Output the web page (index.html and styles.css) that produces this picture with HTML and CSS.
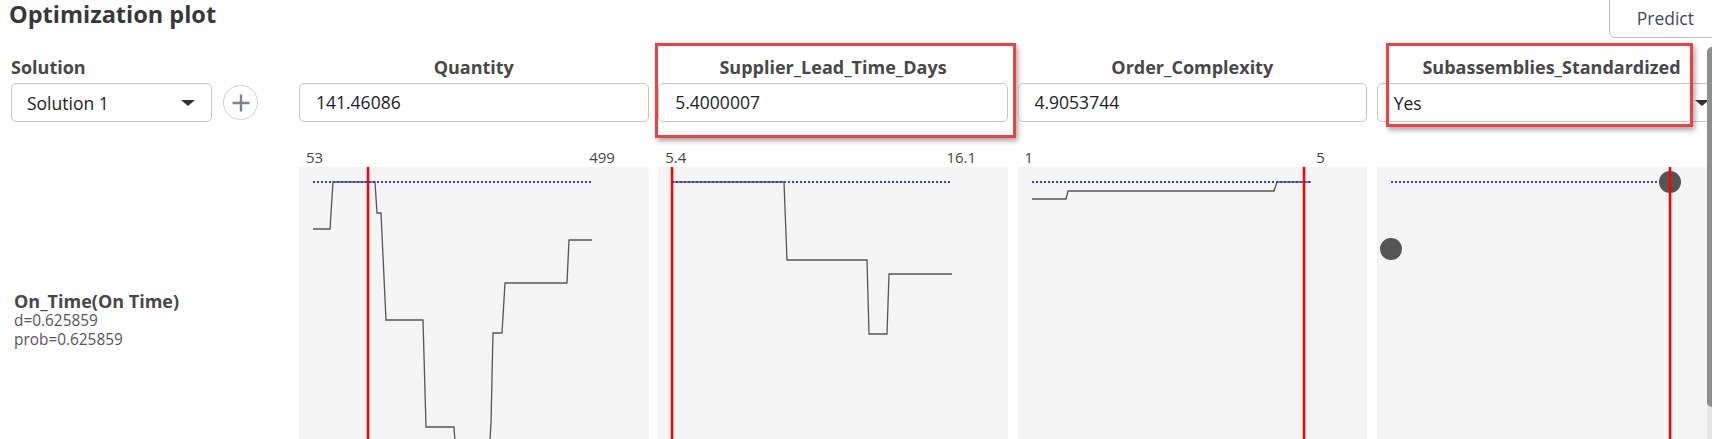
FILE: index.html
```html
<!DOCTYPE html>
<html lang="en">
<head>
<meta charset="utf-8">
<title>Optimization plot</title>
<link rel="stylesheet" href="styles.css">
</head>
<body>
<div class="page">
  <div class="topbar">
    <h1 class="title">Optimization plot</h1>
    <button class="predict">Predict</button>
  </div>

  <div class="grid">
    <!-- row 1: headers -->
    <div class="solution">
      <div class="sol-label">Solution</div>
      <div class="sol-row">
        <div class="select sol-select"><span>Solution 1</span><span class="caret"></span></div>
        <button class="add" aria-label="Add solution">
          <svg viewBox="0 0 20 20" width="20" height="20"><path d="M10 1.5V18.5M1.5 10H18.5"/></svg>
        </button>
      </div>
    </div>
    <div class="factor">
      <div class="flabel">Quantity</div>
      <div class="field">141.46086</div>
    </div>
    <div class="factor">
      <div class="flabel">Supplier_Lead_Time_Days</div>
      <div class="field">5.4000007</div>
      <div class="mark mark-supplier"></div>
    </div>
    <div class="factor">
      <div class="flabel">Order_Complexity</div>
      <div class="field">4.9053744</div>
    </div>
    <div class="factor">
      <div class="flabel">Subassemblies_Standardized</div>
      <div class="select field-select"><span>Yes</span><span class="caret"></span></div>
      <div class="mark mark-subassy"></div>
    </div>

    <!-- row 2: axis ranges -->
    <div></div>
    <div class="axis"><span>53</span><span class="axis-max">499</span></div>
    <div class="axis"><span>5.4</span><span class="axis-max">16.1</span></div>
    <div class="axis"><span>1</span><span class="axis-max">5</span></div>
    <div class="axis"></div>

    <!-- row 3: response + panels -->
    <div class="resp">
      <div class="resp-name">On_Time(On Time)</div>
      <div class="resp-val">d=0.625859</div>
      <div class="resp-val">prob=0.625859</div>
    </div>
    <div class="panel">
      <svg viewBox="0 0 349.5 305">
        <polyline class="curve" points="14,62 31,62 34,15 76,15 78,46 82,46 87,153 124,153 127,260 155,260 157,290 190,290 192,256 194,166 203,166 206,116 268,116 270,73 293,73"/>
        <line class="target" x1="14" y1="15" x2="293" y2="15"/>
        <line class="current" x1="69" y1="0" x2="69" y2="305"/>
      </svg>
    </div>
    <div class="panel">
      <svg viewBox="0 0 349.5 305">
        <polyline class="curve" points="14,15 126,15 129,93 209,93 211,167 229,167 231,107 294,107"/>
        <line class="target" x1="14" y1="15" x2="292" y2="15"/>
        <line class="current" x1="14" y1="0" x2="14" y2="305"/>
      </svg>
    </div>
    <div class="panel">
      <svg viewBox="0 0 349.5 305">
        <polyline class="curve" points="14,32 48,32 50,24 256,24 259,15 293,15"/>
        <line class="target" x1="14" y1="15" x2="293" y2="15"/>
        <line class="current" x1="286" y1="0" x2="286" y2="305"/>
      </svg>
    </div>
    <div class="panel">
      <svg viewBox="0 0 349.5 305">
        <line class="target" x1="14" y1="15" x2="292" y2="15"/>
        <circle class="pt" cx="14" cy="82" r="11"/>
        <circle class="pt" cx="293" cy="15" r="11"/>
        <line class="current" x1="293" y1="0" x2="293" y2="305"/>
      </svg>
    </div>
  </div>
</div>
<div class="vscroll"><div class="vscroll-thumb"></div></div>
</body>
</html>
```
FILE: styles.css
```css
* { box-sizing: border-box; }
html, body { margin: 0; padding: 0; }
body {
  width: 1712px;
  height: 439px;
  overflow: hidden;
  position: relative;
  background: #fff;
  font-family: "Open Sans", "Noto Sans", sans-serif;
  color: #333;
}
.page { width: 1726px; }

.topbar {
  display: flex;
  justify-content: space-between;
  align-items: flex-start;
  height: 38px;
}
.title {
  margin: 0;
  padding-left: 9px;
  font-size: 23.5px;
  line-height: 28px;
  font-weight: 700;
  color: #383838;
}
.predict {
  margin: -6px 4px 0 0;
  height: 44px;
  padding: 4px 27px 0;
  border: 1px solid #bdbdbd;
  border-radius: 6px;
  background: #fff;
  font-family: inherit;
  font-size: 17.5px;
  line-height: 24px;
  color: #3e4a5a;
}

.grid {
  display: grid;
  grid-template-columns: 289.25px repeat(4, 349.5px);
  grid-template-rows: 67px 45px 305px;
  column-gap: 9.75px;
  margin-top: 17px;
}

.solution { padding-left: 11px; display: flex; flex-direction: column; gap: 4px; }
.sol-label, .flabel {
  font-size: 18px;
  font-weight: 700;
  line-height: 24px;
  color: #484848;
  white-space: nowrap;
}
.sol-row { display: flex; align-items: center; gap: 11px; }

.select {
  height: 39px;
  display: flex;
  align-items: center;
  justify-content: space-between;
  padding: 0 16px 0 15px;
  border: 1px solid #c6c6c6;
  border-radius: 5px;
  font-size: 17.5px;
  color: #222;
  background: #fff;
}
.sol-select { width: 201px; }
.caret {
  width: 0;
  height: 0;
  border-left: 7px solid transparent;
  border-right: 7px solid transparent;
  border-top: 6px solid #333;
}
.add {
  width: 35px;
  height: 35px;
  padding: 0;
  border: 1px solid #c9ced6;
  border-radius: 50%;
  background: #fff;
  display: flex;
  align-items: center;
  justify-content: center;
}
.add svg { fill: none; stroke: #7b8290; stroke-width: 2.4; }

.factor { position: relative; display: flex; flex-direction: column; gap: 4px; }
.flabel { text-align: center; }
.field {
  height: 39px;
  padding-left: 16px;
  border: 1px solid #c6c6c6;
  border-radius: 5px;
  font-size: 17.5px;
  line-height: 37px;
  color: #222;
}
.field-select { padding-left: 16px; }

.mark {
  position: absolute;
  border: 3px solid #ef4141;
  box-shadow: 2px 3px 5px rgba(0, 0, 0, 0.35);
  pointer-events: none;
}
.mark-supplier { left: -3px; top: -12px; width: 361px; height: 95px; }
.mark-subassy { left: 9px; top: -12px; width: 307px; height: 84px; }

.axis {
  display: flex;
  justify-content: space-between;
  align-items: flex-end;
  padding: 0 26.5px 0 7px;
  font-size: 15px;
  line-height: 20px;
  color: #444;
}
.axis-max { width: 40px; text-align: center; }

.resp { align-self: center; padding-left: 14px; color: #444; }
.resp-name { font-size: 18px; font-weight: 700; line-height: 22px; color: #484848; }
.resp-val { font-size: 15.4px; line-height: 18.5px; color: #555; }

.panel { background: #f4f4f4; overflow: hidden; }
.panel svg { display: block; width: 100%; height: 100%; }
.curve { fill: none; stroke: #555; stroke-width: 1.3; }
.target { stroke: #3636ff; stroke-width: 2; stroke-dasharray: 2 2; }
.current { stroke: #ff0000; stroke-width: 2.5; }
.pt { fill: #555; }

.vscroll {
  position: absolute;
  left: 1707px;
  top: 47px;
  bottom: 0;
  width: 10px;
  background: #e6e6e6;
  border-radius: 5px 5px 0 0;
}
.vscroll-thumb { height: 360px; background: #8e8e8e; border-radius: 5px; }
```
